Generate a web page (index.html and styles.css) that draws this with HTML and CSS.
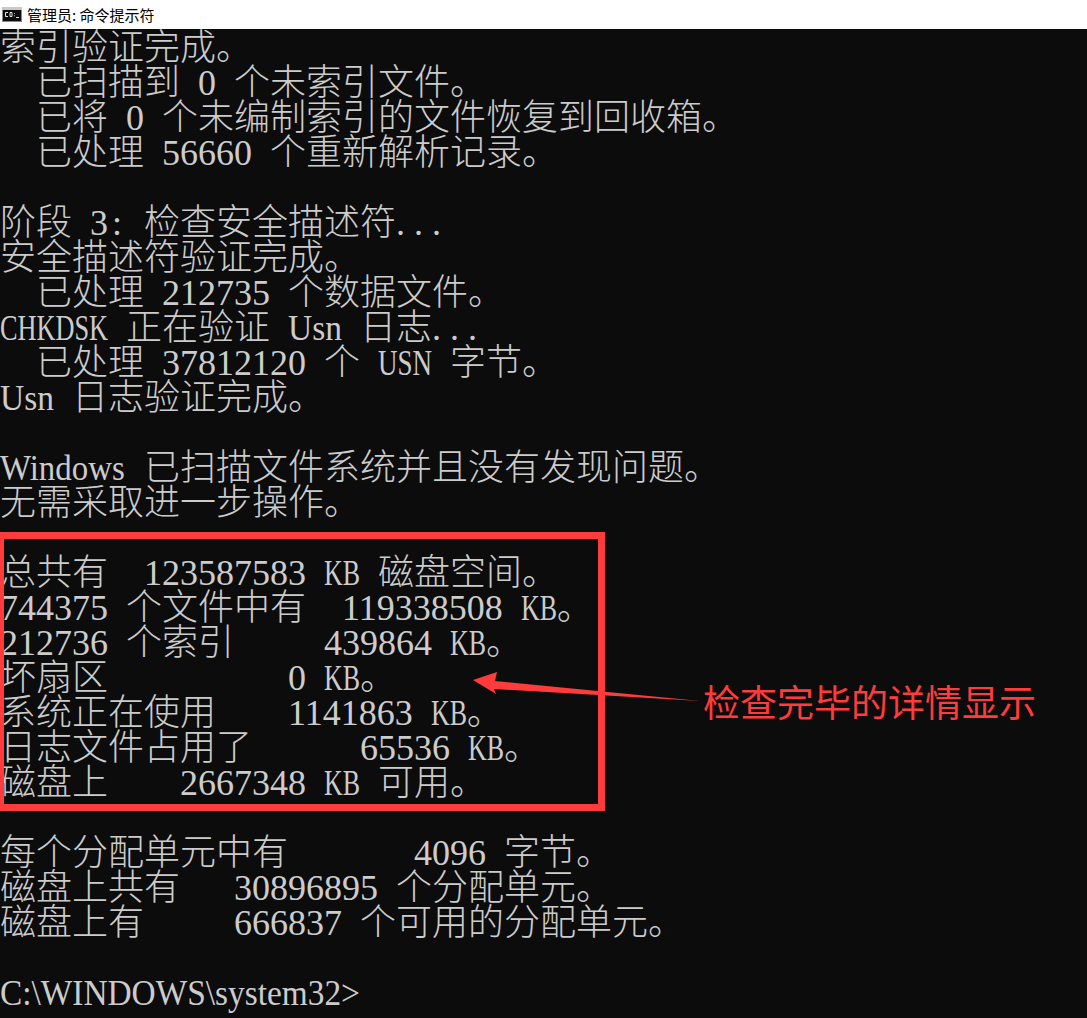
FILE: index.html
```html
<!DOCTYPE html>
<html lang="zh-CN">
<head>
<meta charset="utf-8">
<title>管理员: 命令提示符</title>
<link rel="stylesheet" href="styles.css">
</head>
<body>
<div class="window">
  <header class="titlebar">
    <svg class="app-icon" viewBox="0 0 20 15" width="20" height="15" aria-hidden="true">
      <rect x="0" y="0" width="20" height="15" fill="#8a8a8a"/>
      <rect x="0" y="0" width="20" height="3" fill="#c8c8c8"/>
      <rect x="1" y="3" width="18" height="11" fill="#0c0c0c"/>
      <path d="M6 5.5H3.5V9.5H6M8 5.5H10V9.5H8ZM12 6.5h.8M12 8.8h.8M14 10.5H17" fill="none" stroke="#e6e6e6" stroke-width="1"/>
    </svg>
    <span class="title">管理员: 命令提示符</span>
  </header>
  <main class="console">
<pre class="output">索引验证完成。
  已扫描到 0 个未索引文件。
  已将 0 个未编制索引的文件恢复到回收箱。
  已处理 56660 个重新解析记录。

阶段 <span class="fit-colon">3:</span> 检查安全描述符<span class="fit-dots">...</span>
安全描述符验证完成。
  已处理 212735 个数据文件。
<span class="fit fit-chkdsk">CHKDSK</span> 正在验证 <span class="fit fit-usn">Usn</span> 日志<span class="fit-dots">...</span>
  已处理 37812120 个 <span class="fit fit-usn-caps">USN</span> 字节。
<span class="fit fit-usn">Usn</span> 日志验证完成。

<span class="fit fit-windows">Windows</span> 已扫描文件系统并且没有发现问题。
无需采取进一步操作。

总共有  123587583 <span class="fit fit-kb">KB</span> 磁盘空间。
744375 个文件中有  119338508 <span class="fit fit-kb">KB</span>。
212736 个索引     439864 <span class="fit fit-kb">KB</span>。
坏扇区          0 <span class="fit fit-kb">KB</span>。
系统正在使用    1141863 <span class="fit fit-kb">KB</span>。
日志文件占用了      65536 <span class="fit fit-kb">KB</span>。
磁盘上    2667348 <span class="fit fit-kb">KB</span> 可用。

每个分配单元中有       4096 字节。
磁盘上共有   30896895 个分配单元。
磁盘上有     666837 个可用的分配单元。

<span class="fit fit-prompt">C:\WINDOWS\system32&gt;</span></pre>
    <div class="highlight-box"></div>
    <svg class="arrow" viewBox="0 0 240 40" width="240" height="40" aria-hidden="true">
      <polygon points="3,10 27,2 25,11 230,31 24,19 26,24" fill="#ff3b3b"/>
    </svg>
    <div class="annotation">检查完毕的详情显示</div>
  </main>
</div>
</body>
</html>
```
FILE: styles.css
```css
* { box-sizing: border-box; }
html, body { margin: 0; padding: 0; background: #0c0c0c; }
.window { width: 1087px; height: 1018px; overflow: hidden; display: flex; flex-direction: column; }
.titlebar {
  height: 29px; flex: none; background: #fff; display: flex; align-items: center;
  padding-left: 2px; gap: 5px;
  font-family: "Noto Sans CJK SC", "Noto Sans", sans-serif; font-size: 15px; color: #000;
}
.app-icon { flex: none; }
.title { line-height: 29px; }
.console { position: relative; flex: 1; background: #0c0c0c; }
.output {
  margin: 0; padding-top: 2px; color: #cccccc;
  font-family: "Liberation Serif", "Noto Sans CJK SC", serif;
  font-size: 36px; line-height: 35px; font-weight: 300;
  word-spacing: .25em; white-space: pre;
}
/* Squeeze proportional Latin words into the terminal's half-width cells */
.fit { display: inline-block; transform-origin: left center; }
.fit-kb { width: 1em; transform: scaleX(.72); }
.fit-chkdsk { width: 3em; transform: scaleX(.73); }
.fit-usn { width: 1.5em; transform: scaleX(.93); }
.fit-usn-caps { width: 1.5em; transform: scaleX(.75); }
.fit-windows { width: 3.5em; transform: scaleX(.913); }
.fit-prompt { width: 10em; transform: scaleX(.927); }
.fit-colon { letter-spacing: .111em; }
.fit-dots { letter-spacing: .25em; }
.highlight-box {
  position: absolute; left: -3px; top: 503px; width: 608px; height: 279px;
  border: 7px solid #ff3b3b;
}
.arrow { position: absolute; left: 470px; top: 641px; }
.annotation {
  position: absolute; left: 703px; top: 648px; color: #ff3b3b; white-space: nowrap;
  font-family: "Noto Sans CJK SC", sans-serif; font-size: 37px; line-height: 48px; font-weight: 400;
}
```
